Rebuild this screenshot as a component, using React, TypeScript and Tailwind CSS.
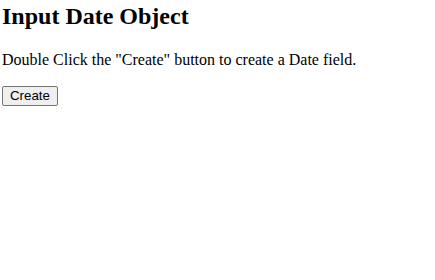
export default function App() {
  return (
    <div className="min-h-screen bg-white px-[2px] pt-[3px] text-black font-['Liberation_Serif','Times_New_Roman',serif]">
      <h2 className="text-[24px] font-bold leading-[27px] mb-[21px]">Input Date Object</h2>
      <p className="text-[16px] leading-[18px] mb-[14px]">
        Double Click the "Create" button to create a Date field.
      </p>
      <button
        type="button"
        className="h-[20px] w-[56px] rounded-[2px] border border-[#767676] bg-[#efefef] text-[13.33px] leading-[16px] font-['Liberation_Sans',Arial,sans-serif] text-black"
      >
        Create
      </button>
    </div>
  );
}
